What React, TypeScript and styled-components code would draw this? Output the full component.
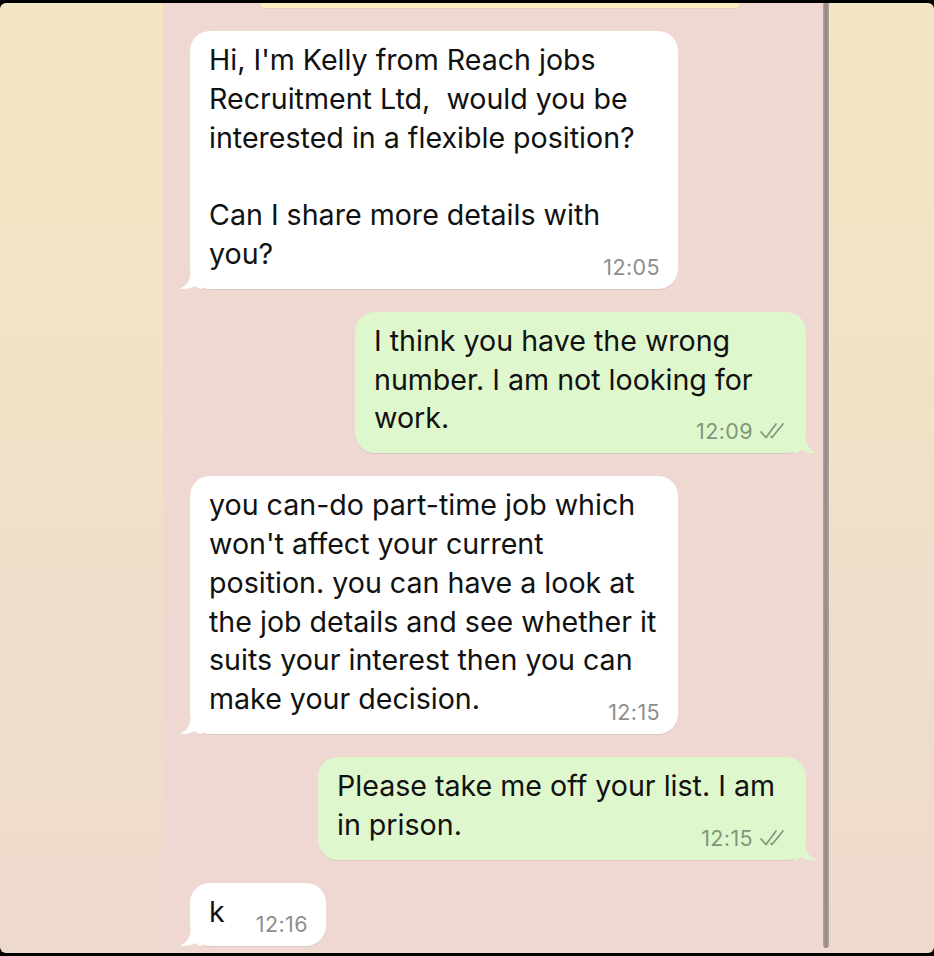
import React from "react";
import styled, { createGlobalStyle } from "styled-components";

const GlobalStyle = createGlobalStyle`
  html, body { margin: 0; padding: 0; background: #000; }
  body { font-family: Inter, "Liberation Sans", sans-serif; }
`;

const Frame = styled.div`
  margin-top: 3px;
  height: 950px;
  border-radius: 6px;
  overflow: hidden;
  display: grid;
  grid-template-columns: 163px 660px 6px 1fr;
  background: linear-gradient(180deg, #f2e6c4 0%, #f1e3c6 35%, #efdecb 65%, #eedacd 100%);
`;

const SidePanel = styled.div``;

const ChatPanel = styled.div`
  background: #efd7d2;
  display: flex;
  flex-direction: column;
  gap: 23px;
  padding: 0 17px 0 27px;
`;

const Notice = styled.div`
  width: 480px;
  height: 5px;
  margin-left: 70px;
  background: #fbeec0;
  border-radius: 0 0 10px 10px;
  box-shadow: 0 1px 1px rgba(0, 0, 0, 0.06);
`;

const Scrollbar = styled.div`
  background: linear-gradient(90deg, #b3a6a2 0%, #978b88 40%, #978b88 60%, #b3a6a2 100%);
  height: 945px;
  border-radius: 0 0 3px 3px;
`;

const Bubble = styled.div<{ $out?: boolean; $w: number }>`
  position: relative;
  width: ${(p) => p.$w}px;
  box-sizing: border-box;
  align-self: ${(p) => (p.$out ? "flex-end" : "flex-start")};
  background: ${(p) => (p.$out ? "#dff7cd" : "#ffffff")};
  border-radius: 20px;
  padding: 10px 18px 11px 19px;
  display: grid;
  box-shadow: 0 1px 0.5px rgba(0, 0, 0, 0.08);
`;

const Text = styled.div`
  grid-area: 1 / 1;
  display: flex;
  flex-direction: column;
  align-items: flex-start;
  font-size: 28.6px;
  line-height: 38.8px;
  color: #111;
  white-space: pre;
  padding-bottom: 4px;
`;

const Line = styled.div`
  min-height: 38.8px;
`;

const Meta = styled.div<{ $out?: boolean }>`
  grid-area: 1 / 1;
  justify-self: end;
  align-self: end;
  display: flex;
  align-items: center;
  gap: 5px;
  font-size: 21.5px;
  letter-spacing: 0.4px;
  line-height: 22px;
  color: ${(p) => (p.$out ? "#7f977a" : "#8e8e8e")};
`;

const TailWrap = styled.svg<{ $out?: boolean }>`
  position: absolute;
  bottom: 0;
  ${(p) => (p.$out ? "right: -10px;" : "left: -10px;")}
  width: 22px;
  height: 22px;
`;

const Tail = ({ out }: { out?: boolean }) => (
  <TailWrap $out={out} viewBox="0 0 22 22">
    {out ? (
      <path d="M0 0 L11 0 C11 12 14 18 21 21 C22 22 21 22 19 22 C14 22 10 21 7 19 C5 21 2 22 0 22 Z" fill="#dff7cd" />
    ) : (
      <path d="M22 0 L11 0 C11 12 8 18 1 21 C0 22 1 22 3 22 C8 22 12 21 15 19 C17 21 20 22 22 22 Z" fill="#ffffff" />
    )}
  </TailWrap>
);

const Checks = () => (
  <svg width="30" height="18" viewBox="0 0 30 18" fill="none" stroke="currentColor" strokeWidth="1.7" strokeLinecap="round" strokeLinejoin="round">
    <path d="M3 10 L8 15.5 L18 2" />
    <path d="M13 14.5 L14 15.5 L25 2" />
  </svg>
);

type Msg = { out?: boolean; w: number; lines: string[]; time: string };

const messages: Msg[] = [
  {
    w: 488,
    lines: [
      "Hi, I'm Kelly from Reach jobs",
      "Recruitment Ltd,  would you be",
      "interested in a flexible position?",
      "",
      "Can I share more details with",
      "you?",
    ],
    time: "12:05",
  },
  {
    out: true,
    w: 451,
    lines: ["I think you have the wrong", "number. I am not looking for", "work."],
    time: "12:09",
  },
  {
    w: 488,
    lines: [
      "you can-do part-time job which",
      "won't affect your current",
      "position. you can have a look at",
      "the job details and see whether it",
      "suits your interest then you can",
      "make your decision.",
    ],
    time: "12:15",
  },
  {
    out: true,
    w: 488,
    lines: ["Please take me off your list. I am", "in prison."],
    time: "12:15",
  },
  { w: 136, lines: ["k"], time: "12:16" },
];

export default function App() {
  return (
    <>
      <GlobalStyle />
      <Frame>
        <SidePanel />
        <ChatPanel>
          <Notice />
          {messages.map((m, i) => (
            <Bubble key={i} $out={m.out} $w={m.w}>
              <Text>
                {m.lines.map((l, j) => (
                  <Line key={j}>{l}</Line>
                ))}
              </Text>
              <Meta $out={m.out}>
                <span>{m.time}</span>
                {m.out && <Checks />}
              </Meta>
              <Tail out={m.out} />
            </Bubble>
          ))}
        </ChatPanel>
        <Scrollbar />
        <SidePanel />
      </Frame>
    </>
  );
}
